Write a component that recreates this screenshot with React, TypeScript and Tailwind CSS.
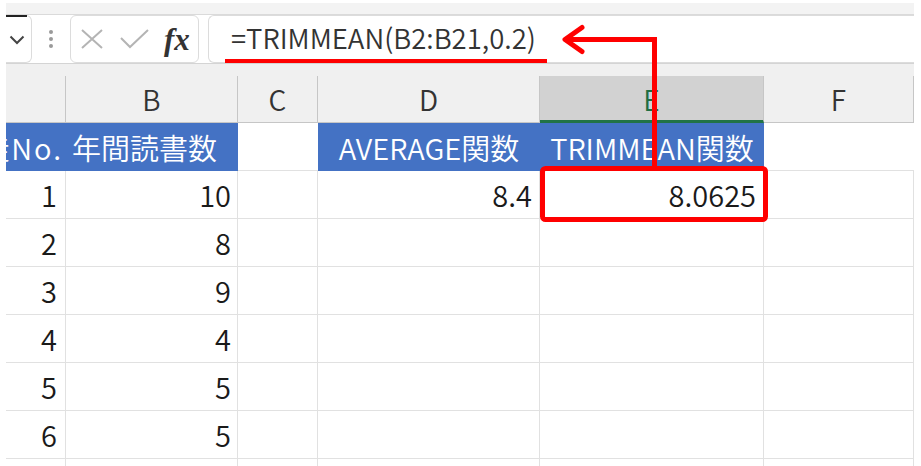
import React from 'react';

const font = { fontFamily: '"Noto Sans CJK JP", "Noto Sans", sans-serif' };

const letters = ['', 'B', 'C', 'D', 'E', 'F'];

const rows: string[][] = [
  ['1', '10', '', '8.4', '8.0625', ''],
  ['2', '8', '', '', '', ''],
  ['3', '9', '', '', '', ''],
  ['4', '4', '', '', '', ''],
  ['5', '5', '', '', '', ''],
  ['6', '5', '', '', '', ''],
  ['', '', '', '', '', ''],
];

function FormulaBar() {
  return (
    <div className="flex h-[48px] items-start bg-white">
      {/* name box, cut off on the left */}
      <div className="relative flex h-[48px] w-[26px] items-center justify-center rounded-r-[6px] border-y border-r border-[#dcdcdc] bg-white">
        <div className="absolute left-0 right-[4px] top-[-1px] h-[2px] bg-[#222]" />
        <svg width="16" height="10" viewBox="0 0 16 10" className="mt-[2px] mr-[4px]">
          <path d="M1.5 1.5 L8 8 L14.5 1.5" fill="none" stroke="#444" strokeWidth="2" />
        </svg>
      </div>
      <div className="flex h-[48px] w-[38px] flex-col items-center justify-center gap-[3px]">
        <span className="h-[4px] w-[4px] rounded-full bg-[#9a9a9a]" />
        <span className="h-[4px] w-[4px] rounded-full bg-[#9a9a9a]" />
        <span className="h-[4px] w-[4px] rounded-full bg-[#9a9a9a]" />
      </div>
      <div className="flex h-[48px] w-[129px] items-center rounded-[6px] border border-[#dcdcdc] bg-white pl-[9px]">
        <svg width="24" height="20" viewBox="0 0 24 20">
          <path d="M2 1 L22 19 M22 1 L2 19" stroke="#b4b4b4" strokeWidth="2" fill="none" />
        </svg>
        <svg width="30" height="20" viewBox="0 0 30 20" className="ml-[16px]">
          <path d="M1 9 L10 18 L28 1" stroke="#b4b4b4" strokeWidth="2" fill="none" />
        </svg>
        <span
          className="ml-[14px] text-[31px] font-bold italic leading-none text-[#333]"
          style={{ fontFamily: '"Liberation Serif", "DejaVu Serif", serif' }}
        >
          fx
        </span>
      </div>
      <div className="ml-[9px] flex h-[48px] flex-1 items-center rounded-l-[6px] border-y border-l border-[#dcdcdc] bg-white pb-[3px] pl-[22px]">
        <span className="text-[27.5px] font-[350] leading-none text-[#333]">=TRIMMEAN(B2:B21,0.2)</span>
      </div>
    </div>
  );
}

function ColumnHeaders() {
  return (
    <div className="grid grid-cols-[60px_172px_80px_222px_224px_150px] border-t border-[#d4d4d4] bg-[#f0f0f0] pt-[12px] font-[350]">
      {letters.map((l, i) => (
        <div
          key={i}
          className={
            'flex h-[47px] items-center justify-center border-r text-[28px] ' +
            (l === 'E'
              ? 'border-b-[3px] border-r-[#c6c6c6] border-b-[#217346] bg-[#d2d2d2] pt-[2px] text-[#1f6e43]'
              : 'border-b border-[#c6c6c6] text-[#333]')
          }
        >
          {l}
        </div>
      ))}
    </div>
  );
}

function TitleRow() {
  const blue = 'bg-[#4472c4] text-white';
  return (
    <div className="grid grid-cols-[60px_172px_80px_222px_224px_150px] text-[29px] font-[350] leading-none">
      <div className={'flex h-[48px] items-center justify-end overflow-hidden whitespace-nowrap pr-[3px] ' + blue}>
        <span className="tracking-[2px]">徒No.</span>
      </div>
      <div className={'flex h-[48px] items-center whitespace-nowrap pl-[6px] ' + blue}>年間読書数</div>
      <div className="h-[48px] border-b border-[#e1e1e1] bg-white" />
      <div className={'flex h-[48px] items-center justify-center whitespace-nowrap ' + blue}>AVERAGE関数</div>
      <div className={'flex h-[48px] items-center justify-center whitespace-nowrap ' + blue}>TRIMMEAN関数</div>
      <div className="h-[48px] border-b border-[#e1e1e1] bg-white" />
    </div>
  );
}

function DataRows() {
  const pads = ['pr-[8px]', 'pr-[6px]', 'pr-[6px]', 'pr-[7px]', 'pr-[7px]', 'pr-[7px]'];
  return (
    <div className="grid grid-cols-[60px_172px_80px_222px_224px_150px] text-[29px] font-[350] leading-none text-[#1a1a1a]">
      {rows.map((r, ri) =>
        r.map((v, ci) => (
          <div
            key={ri + '-' + ci}
            className={'flex h-[48px] items-center justify-end border-b border-r border-[#e1e1e1] ' + pads[ci]}
          >
            {v}
          </div>
        ))
      )}
    </div>
  );
}

export default function App() {
  return (
    <div className="relative h-[466px] w-[921px] overflow-hidden bg-white" style={font}>
      <div className="pl-[6px] pr-[7px] pt-[3px]">
        <div className="h-[12px] border-b border-[#dadada] bg-[#f3f3f3]" />
        <FormulaBar />
        <ColumnHeaders />
        <TitleRow />
        <DataRows />
      </div>

      {/* red annotations */}
      <svg className="pointer-events-none absolute left-0 top-0" width="921" height="466" viewBox="0 0 921 466">
        <rect x="225" y="59" width="322" height="4" fill="#ff0000" />
        <path d="M654.5 168 V39.5 H566" fill="none" stroke="#ff0000" strokeWidth="5" />
        <path d="M582 27.5 L565 39.5 L582 51.5" fill="none" stroke="#ff0000" strokeWidth="5" strokeLinecap="round" strokeLinejoin="round" />
        <rect x="542.5" y="168.5" width="223" height="51" rx="3" fill="none" stroke="#ff0000" strokeWidth="5" />
      </svg>
    </div>
  );
}
